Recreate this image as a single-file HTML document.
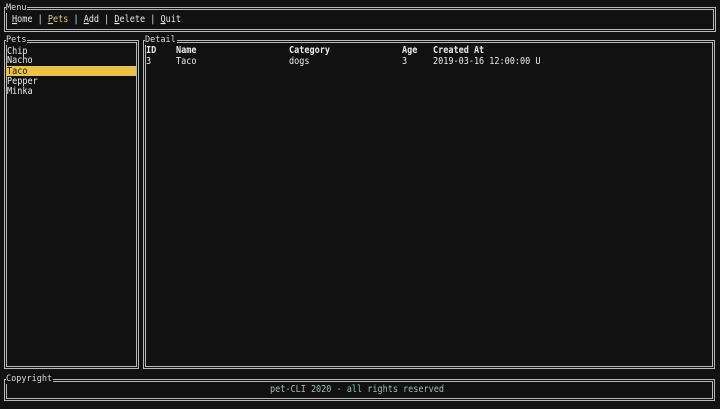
<!DOCTYPE html>
<html><head><meta charset="utf-8"><style>
*{margin:0;padding:0;box-sizing:border-box}
body{width:720px;height:409px;background:#111;overflow:hidden;font-family:"DejaVu Sans Mono","Liberation Mono",monospace;font-size:8.5px;color:#ececec;position:relative}
.box{position:absolute;border:3px double #b8b8b8}
.lbl{position:absolute;background:#111;line-height:10px;color:#ddd;padding:0 1px 0 0}
.t{position:absolute;white-space:pre;line-height:10.3px;transform:scaleY(1.12);transform-origin:0 0}
u{text-decoration:underline}
.b{font-weight:bold}
</style></head><body>
<div class="box" style="left:4px;top:7px;width:712px;height:25px"></div>
<div class="lbl" style="left:6px;top:3px">Menu</div>
<div class="t" style="left:12px;top:14px;color:#e8e8e8"><u>H</u>ome | <span style="color:#e0cd8a"><u>P</u>ets</span> | <u>A</u>dd | <u>D</u>elete | <u>Q</u>uit</div>

<div class="box" style="left:4px;top:40px;width:135px;height:329px"></div>
<div class="lbl" style="left:6px;top:35px">Pets</div>
<div style="position:absolute;left:6px;top:66px;width:130px;height:10px;background:#e9c246"></div>
<div class="t" style="left:7px;top:45.5px">Chip</div>
<div class="t" style="left:7px;top:55px">Nacho</div>
<div class="t" style="left:7px;top:65.5px;color:#111">Taco</div>
<div class="t" style="left:7px;top:76px">Pepper</div>
<div class="t" style="left:7px;top:86px">Minka</div>

<div class="box" style="left:143px;top:40px;width:572px;height:329px"></div>
<div class="lbl" style="left:145px;top:35px">Detail</div>
<div class="t b" style="left:146px;top:45px">ID
<span style="font-weight:normal">3</span></div>
<div class="t b" style="left:176px;top:45px">Name
<span style="font-weight:normal">Taco</span></div>
<div class="t b" style="left:289px;top:45px">Category
<span style="font-weight:normal">dogs</span></div>
<div class="t b" style="left:402px;top:45px">Age
<span style="font-weight:normal">3</span></div>
<div class="t b" style="left:433px;top:45px">Created At
<span style="font-weight:normal">2019-03-16 12:00:00 U</span></div>

<div class="box" style="left:4px;top:379px;width:711px;height:22px"></div>
<div class="lbl" style="left:6px;top:374px">Copyright</div>
<div class="t" style="left:270px;top:384px;color:#9fbfae">pet-CLI 2020 - all rights reserved</div>
</body></html>
